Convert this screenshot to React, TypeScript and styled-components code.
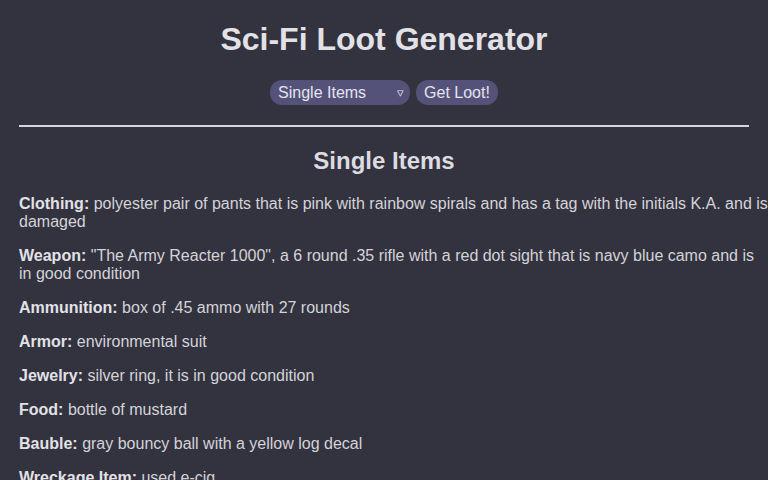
import React from "react";
import styled, { createGlobalStyle } from "styled-components";

const Global = createGlobalStyle`
  html, body { margin: 0; padding: 0; background: #33323f; }
  body { font-family: "Liberation Sans", Arial, sans-serif; color: #dcdce0; }
`;

const Page = styled.div`
  display: flex;
  flex-direction: column;
  padding-top: 21px;
`;

const Title = styled.h1`
  margin: 0;
  text-align: center;
  font-size: 32px;
  line-height: 37px;
  font-weight: bold;
  color: #e2e2e6;
`;

const Controls = styled.div`
  display: flex;
  justify-content: center;
  gap: 6px;
  margin-top: 22px;
`;

const SelectBox = styled.div`
  width: 140px;
  height: 25px;
  box-sizing: border-box;
  border-radius: 12px;
  background: #55527a;
  display: flex;
  align-items: center;
  justify-content: space-between;
  padding: 0 6px 0 8px;
  font-size: 16px;
  color: #e4e4ee;
`;

const Arrow = styled.span`
  font-size: 13px;
`;

const Button = styled.button`
  height: 25px;
  border: none;
  border-radius: 12px;
  background: #55527a;
  color: #e4e4ee;
  font-family: "Liberation Sans", Arial, sans-serif;
  font-size: 16px;
  padding: 0 8px;
`;

const Rule = styled.hr`
  margin: 20px 19px 0 19px;
  border: none;
  height: 2px;
  background: #d8d8dc;
`;

const Heading = styled.h2`
  margin: 20px 0 0 0;
  text-align: center;
  font-size: 24px;
  line-height: 28px;
  font-weight: bold;
  color: #dcdce0;
`;

const List = styled.div`
  padding-left: 19px;
  margin-top: 20px;
`;

const Item = styled.p`
  margin: 0 0 16px 0;
  font-size: 16px;
  line-height: 18px;
  color: #d4d4d8;
`;

const Label = styled.b`
  color: #e2e2e6;
`;

const items: [string, string][] = [
  ["Clothing", "polyester pair of pants that is pink with rainbow spirals and has a tag with the initials K.A. and is damaged"],
  ["Weapon", "\"The Army Reacter 1000\", a 6 round .35 rifle with a red dot sight that is navy blue camo and is in good condition"],
  ["Ammunition", "box of .45 ammo with 27 rounds"],
  ["Armor", "environmental suit"],
  ["Jewelry", "silver ring, it is in good condition"],
  ["Food", "bottle of mustard"],
  ["Bauble", "gray bouncy ball with a yellow log decal"],
  ["Wreckage Item", "used e-cig"],
];

export default function App() {
  return (
    <>
      <Global />
      <Page>
        <Title>Sci-Fi Loot Generator</Title>
        <Controls>
          <SelectBox>
            <span>Single Items</span>
            <Arrow>▿</Arrow>
          </SelectBox>
          <Button>Get Loot!</Button>
        </Controls>
        <Rule />
        <Heading>Single Items</Heading>
        <List>
          {items.map(([k, v]) => (
            <Item key={k}>
              <Label>{k}:</Label> {v}
            </Item>
          ))}
        </List>
      </Page>
    </>
  );
}
